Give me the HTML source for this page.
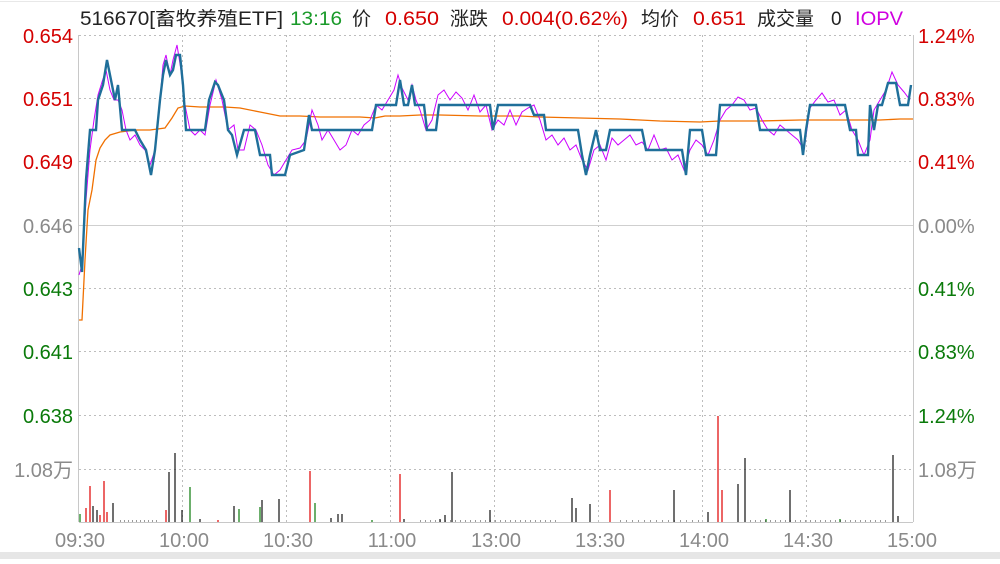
<!DOCTYPE html>
<html><head><meta charset="utf-8"><style>
body{margin:0;background:#fff;width:1000px;height:559px;overflow:hidden;font-family:"Liberation Sans","Noto Sans CJK SC",sans-serif}
svg text{font-family:"Liberation Sans","Noto Sans CJK SC",sans-serif}
</style></head><body>
<svg width="1000" height="559" xmlns="http://www.w3.org/2000/svg">
<rect width="1000" height="559" fill="#fff"/>
<line x1="0" y1="1.5" x2="1000" y2="1.5" stroke="#e8e8e8"/>
<rect x="0" y="552" width="1000" height="7" fill="#e6e6e6"/>
<g font-size="19">
<text x="80" y="25" fill="#222" textLength="203" lengthAdjust="spacingAndGlyphs">516670[畜牧养殖ETF]</text>
<text x="290" y="25" fill="#1a9a2a" textLength="52" lengthAdjust="spacingAndGlyphs">13:16</text>
<text x="352" y="25" fill="#222">价</text>
<text x="385" y="25" fill="#d40000" textLength="54" lengthAdjust="spacingAndGlyphs">0.650</text>
<text x="450" y="25" fill="#222">涨跌</text>
<text x="502" y="25" fill="#d40000" textLength="126" lengthAdjust="spacingAndGlyphs">0.004(0.62%)</text>
<text x="641" y="25" fill="#222">均价</text>
<text x="693" y="25" fill="#d40000" textLength="53" lengthAdjust="spacingAndGlyphs">0.651</text>
<text x="757" y="25" fill="#222">成交量</text>
<text x="831" y="25" fill="#222">0</text>
<text x="855" y="25" fill="#d000e0" textLength="48" lengthAdjust="spacingAndGlyphs">IOPV</text>
</g>
<g stroke="#bdbdbd" stroke-dasharray="2,3" stroke-width="1">
<line x1="79" y1="35.5" x2="913" y2="35.5"/><line x1="79" y1="98.5" x2="913" y2="98.5"/><line x1="79" y1="161.5" x2="913" y2="161.5"/>
<line x1="79" y1="288.5" x2="913" y2="288.5"/><line x1="79" y1="351.5" x2="913" y2="351.5"/><line x1="79" y1="415.5" x2="913" y2="415.5"/><line x1="79" y1="469.5" x2="913" y2="469.5"/>
<line x1="182.5" y1="35" x2="182.5" y2="522"/><line x1="286.5" y1="35" x2="286.5" y2="522"/><line x1="390.5" y1="35" x2="390.5" y2="522"/><line x1="494.5" y1="35" x2="494.5" y2="522"/><line x1="598.5" y1="35" x2="598.5" y2="522"/><line x1="702.5" y1="35" x2="702.5" y2="522"/><line x1="806.5" y1="35" x2="806.5" y2="522"/>
</g>
<line x1="79" y1="225.5" x2="913" y2="225.5" stroke="#cfcfcf"/>
<line x1="78.5" y1="35" x2="78.5" y2="522" stroke="#c8c8c8"/>
<line x1="913.5" y1="35" x2="913.5" y2="522" stroke="#c8c8c8"/>
<line x1="79" y1="522.5" x2="913" y2="522.5" stroke="#c8c8c8"/>
<g font-size="20" text-anchor="end">
<text x="73" y="43" fill="#d40000">0.654</text><text x="73" y="106" fill="#d40000">0.651</text><text x="73" y="169" fill="#d40000">0.649</text>
<text x="73" y="233" fill="#8a8a8a">0.646</text>
<text x="73" y="296" fill="#0a7a0a">0.643</text><text x="73" y="359" fill="#0a7a0a">0.641</text><text x="73" y="423" fill="#0a7a0a">0.638</text>
<text x="73" y="477" fill="#8a8a8a">1.08万</text>
</g>
<g font-size="20">
<text x="918" y="43" fill="#d40000">1.24%</text><text x="918" y="106" fill="#d40000">0.83%</text><text x="918" y="169" fill="#d40000">0.41%</text>
<text x="918" y="233" fill="#8a8a8a">0.00%</text>
<text x="918" y="296" fill="#0a7a0a">0.41%</text><text x="918" y="359" fill="#0a7a0a">0.83%</text><text x="918" y="423" fill="#0a7a0a">1.24%</text>
<text x="918" y="477" fill="#8a8a8a">1.08万</text>
</g>
<g font-size="20" fill="#8a8a8a" text-anchor="middle">
<text x="80" y="547">09:30</text><text x="184" y="547">10:00</text><text x="288" y="547">10:30</text><text x="392" y="547">11:00</text><text x="496" y="547">13:00</text><text x="600" y="547">13:30</text><text x="704" y="547">14:00</text><text x="808" y="547">14:30</text><text x="912" y="547">15:00</text>
</g>
<polyline fill="none" stroke="#f07000" stroke-width="1.3" points="79,320 82,320 85,260 88,210 92,190 96,160 100,148 105,140 110,135 120,132 135,130 150,130 165,128 172,118 178,108 185,106 200,107 215,107 225,107 240,108 260,112 280,116 300,116 320,117 360,117 375,118 385,116 400,116 420,115 440,115 480,116 520,116 540,117 580,118 620,119 660,121 700,122 720,121 760,121 800,120 840,120 880,120 900,119 913,119"/>
<polyline fill="none" stroke="#cc00ff" stroke-width="1" points="79,275 82,265 86,200 90,150 94,120 98,95 102,82 106,70 110,90 114,100 118,100 122,110 126,130 130,140 135,135 140,145 145,150 150,165 155,150 160,100 163,65 166,55 170,75 173,60 177,45 181,70 184,100 190,130 195,135 200,130 205,135 210,105 216,80 222,100 228,130 234,125 238,150 244,150 250,125 256,130 262,145 268,165 274,175 280,170 286,160 292,150 300,148 306,140 312,110 318,125 322,140 328,130 334,140 340,150 346,145 352,130 358,135 364,125 370,120 376,105 382,110 388,100 394,90 398,75 402,88 408,100 412,85 416,100 420,110 426,130 432,120 438,95 444,90 450,100 456,92 462,98 468,110 474,95 480,112 486,105 492,130 498,120 504,125 510,110 516,125 522,112 528,108 534,105 540,120 546,140 552,135 558,145 564,138 570,150 576,145 582,160 588,170 594,150 600,145 606,160 612,138 618,145 624,140 630,135 636,145 642,142 648,150 654,135 660,150 666,148 672,160 678,155 684,170 690,150 696,140 702,145 708,155 714,140 720,120 726,110 732,105 738,97 744,100 750,110 756,108 762,120 768,130 774,135 780,125 786,130 792,135 798,140 804,150 810,108 816,100 822,93 828,102 834,100 840,115 846,110 852,130 858,140 864,155 870,140 874,110 880,100 886,90 892,72 898,85 904,92 910,100"/>
<polyline fill="none" stroke="#1f6f9a" stroke-width="2.4" points="79,248 82,272 86,180 90,130 96,130 98,100 103,85 107,60 112,85 115,100 118,85 122,130 135,130 140,140 146,150 151,175 155,150 160,100 163,75 166,60 170,75 173,70 176,55 180,55 183,85 186,130 205,130 209,100 215,82 218,85 224,100 228,130 232,135 237,155 244,130 255,130 260,155 270,155 272,175 285,175 290,155 304,150 309,115 312,130 372,130 376,105 396,105 400,80 404,105 408,105 412,85 415,105 424,105 427,130 436,130 439,105 490,105 493,130 498,105 530,105 534,115 544,115 546,130 578,130 582,155 586,175 590,155 596,130 600,150 606,150 610,130 642,130 646,150 682,150 686,175 690,130 702,130 706,155 716,155 718,130 720,105 756,105 760,130 800,130 803,155 806,130 810,105 845,105 850,130 856,130 858,155 868,155 870,105 874,130 878,105 882,105 888,83 896,83 900,105 908,105 911,85"/>
<g stroke-width="1.2">
<g stroke="#0a7a0a"><line x1="80" y1="522" x2="80" y2="514"/><line x1="190" y1="522" x2="190" y2="487"/><line x1="239" y1="522" x2="239" y2="509"/><line x1="260" y1="522" x2="260" y2="507"/><line x1="315" y1="522" x2="315" y2="503"/><line x1="372" y1="522" x2="372" y2="520"/><line x1="766" y1="522" x2="766" y2="519"/><line x1="840" y1="522" x2="840" y2="519"/></g>
<g stroke="#e00000"><line x1="86" y1="522" x2="86" y2="508"/><line x1="90" y1="522" x2="90" y2="486"/><line x1="100" y1="522" x2="100" y2="515"/><line x1="104" y1="522" x2="104" y2="481"/><line x1="107" y1="522" x2="107" y2="512"/><line x1="166" y1="522" x2="166" y2="510"/><line x1="218" y1="522" x2="218" y2="520"/><line x1="310" y1="522" x2="310" y2="471"/><line x1="400" y1="522" x2="400" y2="474"/><line x1="610" y1="522" x2="610" y2="490"/><line x1="718" y1="522" x2="718" y2="416"/><line x1="722" y1="522" x2="722" y2="490"/></g>
<g stroke="#111"><line x1="93" y1="522" x2="93" y2="506"/><line x1="97" y1="522" x2="97" y2="510"/><line x1="113" y1="522" x2="113" y2="503"/><line x1="169" y1="522" x2="169" y2="472"/><line x1="175" y1="522" x2="175" y2="453"/><line x1="182" y1="522" x2="182" y2="510"/><line x1="200" y1="522" x2="200" y2="519"/><line x1="234" y1="522" x2="234" y2="506"/><line x1="262" y1="522" x2="262" y2="500"/><line x1="279" y1="522" x2="279" y2="499"/><line x1="331" y1="522" x2="331" y2="518"/><line x1="338" y1="522" x2="338" y2="514"/><line x1="342" y1="522" x2="342" y2="514"/><line x1="404" y1="522" x2="404" y2="519"/><line x1="440" y1="522" x2="440" y2="519"/><line x1="445" y1="522" x2="445" y2="515"/><line x1="452" y1="522" x2="452" y2="472"/><line x1="490" y1="522" x2="490" y2="510"/><line x1="572" y1="522" x2="572" y2="498"/><line x1="576" y1="522" x2="576" y2="508"/><line x1="590" y1="522" x2="590" y2="504"/><line x1="674" y1="522" x2="674" y2="490"/><line x1="708" y1="522" x2="708" y2="512"/><line x1="738" y1="522" x2="738" y2="484"/><line x1="745" y1="522" x2="745" y2="458"/><line x1="790" y1="522" x2="790" y2="490"/><line x1="893" y1="522" x2="893" y2="455"/><line x1="898" y1="522" x2="898" y2="516"/></g>
</g>
<g stroke="#333" stroke-width="1"><line x1="120" y1="521" x2="160" y2="521" stroke-dasharray="1,3"/><line x1="420" y1="521" x2="560" y2="521" stroke-dasharray="1,4"/><line x1="620" y1="521" x2="700" y2="521" stroke-dasharray="1,5"/><line x1="750" y1="521" x2="890" y2="521" stroke-dasharray="1,4"/></g>
</svg>
</body></html>
